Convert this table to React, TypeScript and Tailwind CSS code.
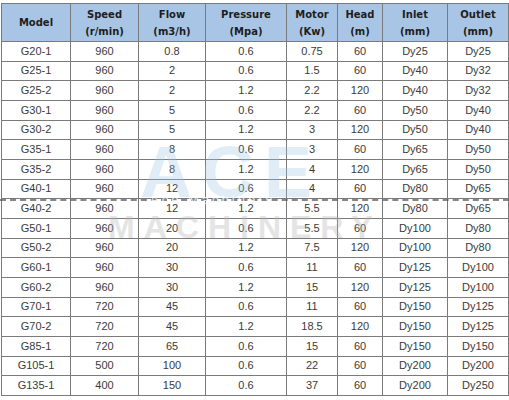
import React from "react";

const head: [string, string][] = [
  ["Model", ""],
  ["Speed", "(r/min)"],
  ["Flow", "(m3/h)"],
  ["Pressure", "(Mpa)"],
  ["Motor", "(Kw)"],
  ["Head", "(m)"],
  ["Inlet", "(mm)"],
  ["Outlet", "(mm)"],
];

const widths = [69, 68, 67, 81, 51, 45, 65, 61];

const rows: string[][] = [
  ["G20-1", "960", "0.8", "0.6", "0.75", "60", "Dy25", "Dy25"],
  ["G25-1", "960", "2", "0.6", "1.5", "60", "Dy40", "Dy32"],
  ["G25-2", "960", "2", "1.2", "2.2", "120", "Dy40", "Dy32"],
  ["G30-1", "960", "5", "0.6", "2.2", "60", "Dy50", "Dy40"],
  ["G30-2", "960", "5", "1.2", "3", "120", "Dy50", "Dy40"],
  ["G35-1", "960", "8", "0.6", "3", "60", "Dy65", "Dy50"],
  ["G35-2", "960", "8", "1.2", "4", "120", "Dy65", "Dy50"],
  ["G40-1", "960", "12", "0.6", "4", "60", "Dy80", "Dy65"],
  ["G40-2", "960", "12", "1.2", "5.5", "120", "Dy80", "Dy65"],
  ["G50-1", "960", "20", "0.6", "5.5", "60", "Dy100", "Dy80"],
  ["G50-2", "960", "20", "1.2", "7.5", "120", "Dy100", "Dy80"],
  ["G60-1", "960", "30", "0.6", "11", "60", "Dy125", "Dy100"],
  ["G60-2", "960", "30", "1.2", "15", "120", "Dy125", "Dy100"],
  ["G70-1", "720", "45", "0.6", "11", "60", "Dy150", "Dy125"],
  ["G70-2", "720", "45", "1.2", "18.5", "120", "Dy150", "Dy125"],
  ["G85-1", "720", "65", "0.6", "15", "60", "Dy150", "Dy150"],
  ["G105-1", "500", "100", "0.6", "22", "60", "Dy200", "Dy200"],
  ["G135-1", "400", "150", "0.6", "37", "60", "Dy200", "Dy250"],
];

export default function App() {
  return (
    <div className="relative h-[400px] w-[509px] overflow-hidden bg-white pl-px pt-[3px]">
      <table className="w-[507px] table-fixed border-collapse">
        <colgroup>
          {widths.map((w, i) => (
            <col key={i} style={{ width: w }} />
          ))}
        </colgroup>
        <thead>
          <tr className="h-[38px] bg-[#a9c5e6]">
            {head.map(([a, b]) => (
              <th
                key={a}
                className="border border-[#7a7a7a] p-0 text-center align-middle font-['DejaVu_Sans',sans-serif] text-[10px] font-bold leading-[17px] text-[#1e1e1e]"
              >
                {a}
                {b && (
                  <>
                    <br />
                    {b}
                  </>
                )}
              </th>
            ))}
          </tr>
        </thead>
        <tbody>
          {rows.map((r) => (
            <tr key={r[0]} className="h-[19.67px]">
              {r.map((c, i) => (
                <td
                  key={i}
                  className="border border-[#7a7a7a] p-0 text-center align-middle font-['Liberation_Sans',Arial,sans-serif] text-[11px] leading-none text-[#3a3a3a]"
                >
                  {c}
                </td>
              ))}
            </tr>
          ))}
        </tbody>
      </table>

      {/* watermark over the table */}
      <div className="pointer-events-none absolute left-[140px] top-[136px] font-['Liberation_Sans',sans-serif] text-[72px] font-bold leading-none tracking-[10px] text-[#9cc6e6] opacity-30">
        ACE
      </div>
      <div className="pointer-events-none absolute left-0 top-[199px] h-0 w-[509px] border-t-2 border-dashed border-[#555] opacity-70" />
      <div className="pointer-events-none absolute left-[150px] top-[193px] font-['Liberation_Sans',sans-serif] text-[13px] leading-none tracking-[3px] text-white opacity-80">
        Ace Machinery
      </div>
      <div className="pointer-events-none absolute left-[108px] top-[211px] font-['Liberation_Sans',sans-serif] text-[32px] font-bold leading-none tracking-[9px] text-[#b5b5b5] opacity-35">
        MACHINERY
      </div>
    </div>
  );
}
